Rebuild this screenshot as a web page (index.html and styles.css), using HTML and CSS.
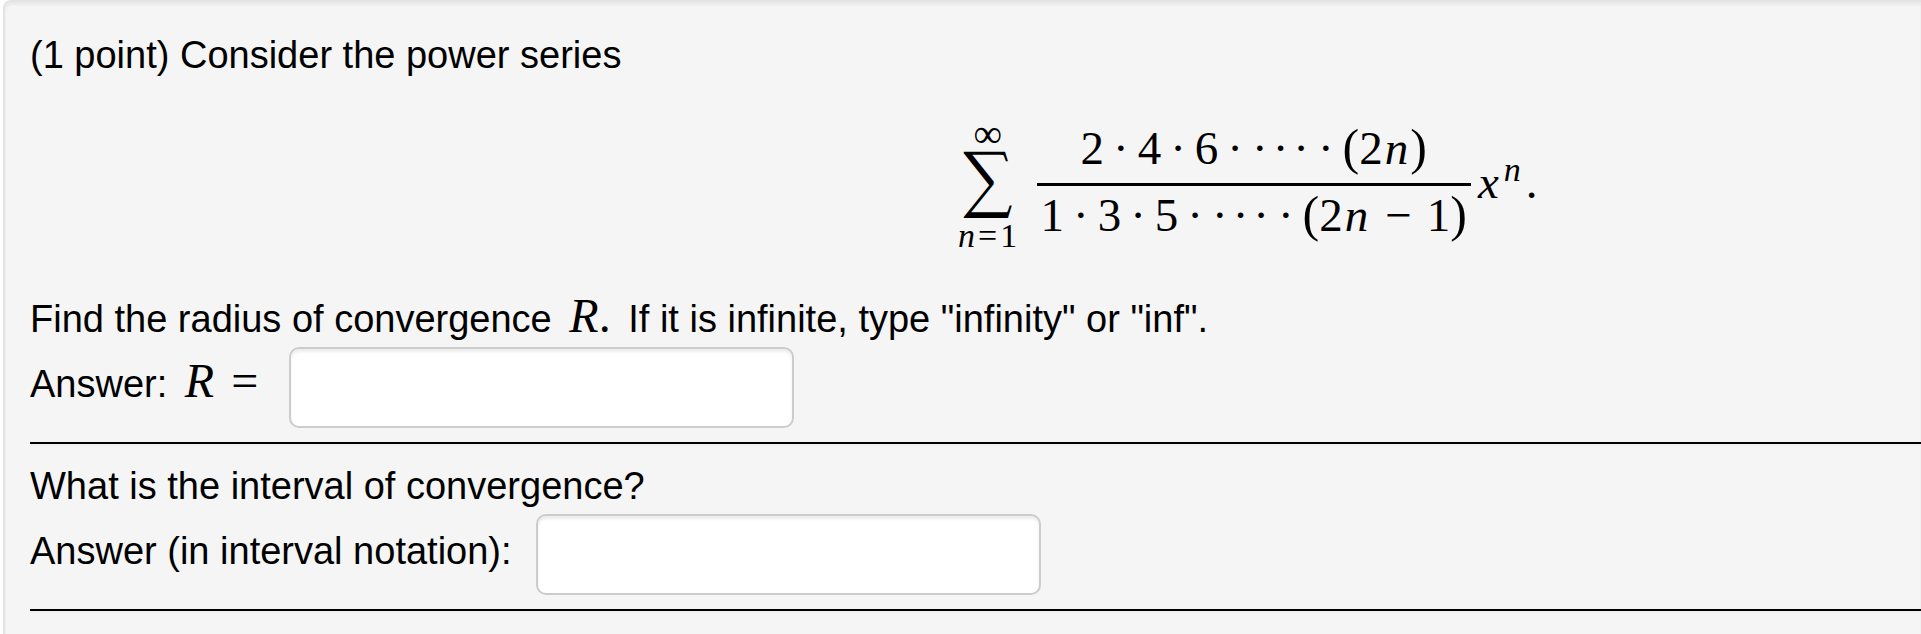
FILE: index.html
```html
<!DOCTYPE html>
<html lang="en">
<head>
<meta charset="utf-8">
<title>Power series</title>
<link rel="stylesheet" href="styles.css">
</head>
<body>
<main class="problem">
  <p class="line">(1 point) Consider the power series</p>
  <div class="formula">
    <div class="sum">
      <span class="sum-upper">∞</span>
      <math class="sum-sign" display="block"><mo>∑</mo></math>
      <span class="sum-lower"><i>n</i><span class="sum-equals">=</span>1</span>
    </div>
    <div class="fraction">
      <div class="numerator">2<span class="op">·</span>4<span class="op">·</span>6<span class="op">·</span><span class="dots"><span>·</span><span>·</span><span>·</span></span><span class="op">·</span><span class="paren">(</span>2<i class="variable">n</i><span class="paren">)</span></div>
      <div class="denominator">1<span class="op">·</span>3<span class="op">·</span>5<span class="op">·</span><span class="dots"><span>·</span><span>·</span><span>·</span></span><span class="op">·</span><span class="paren">(</span>2<i class="variable">n</i><span class="minus">−</span>1<span class="paren">)</span></div>
    </div>
    <div class="term"><i>x</i><sup class="power"><i>n</i></sup>.</div>
  </div>
  <p class="line">Find the radius of convergence <span class="math"><i>R</i>.</span> If it is infinite, type "infinity" or "inf".</p>
  <div class="answer">
    <label class="answer-label" for="radius">Answer: <span class="math"><i>R</i><span class="equals">=</span></span></label>
    <input class="answer-input" id="radius" type="text">
  </div>
  <hr class="rule">
  <p class="line">What is the interval of convergence?</p>
  <div class="answer">
    <label class="answer-label" for="interval">Answer (in interval notation):</label>
    <input class="answer-input" id="interval" type="text">
  </div>
  <hr class="rule">
</main>
</body>
</html>
```
FILE: styles.css
```css
body {
  margin: 0 0 0 3px;
  background: #fff;
  color: #000;
  font-family: "Liberation Sans", Arial, sans-serif;
  font-size: 38px;
  line-height: 55px;
}
.problem {
  box-sizing: border-box;
  min-height: 100vh;
  padding: 26px 0 0 25px;
  border: 2px solid #e3e3e3;
  border-width: 2px 0 0 2px;
  border-radius: 8px 0 0 0;
  background: #f5f5f5;
  box-shadow: inset 0 3px 3px rgba(0, 0, 0, 0.05);
}
.line { margin: 0; }
.formula {
  display: flex;
  justify-content: center;
  align-items: center;
  padding: 26px 0 39px 28%;
  font-family: "Liberation Serif", "Times New Roman", serif;
  font-size: 47px;
}
.sum {
  display: flex;
  flex-direction: column;
  align-items: center;
  margin: 0 14px 0 10px;
  padding-top: 8px;
}
.sum-upper { font-size: 40px; line-height: 34px; }
.sum-sign { font-family: "DejaVu Math TeX Gyre", "DejaVu Serif", serif; font-size: 44px; line-height: 1; }
.sum-lower { font-size: 34px; line-height: 34px; }
.sum-equals { margin: 0 3px; }
.fraction { text-align: center; }
.numerator,
.denominator { padding: 0 4px; line-height: 58px; }
.numerator { padding-bottom: 6px; border-bottom: 3px solid #000; }
.op { margin: 0 9px; }
.dots { display: inline-flex; gap: 5px; }
.minus { margin: 0 15px; }
.variable { margin: 0 2px; }
.paren { font-size: 50px; line-height: 1; }
.term { padding-left: 7px; }
.power {
  margin: 0 5px;
  font-size: 34px;
  line-height: 1;
}
.math {
  margin: 0 7px;
  font-family: "Liberation Serif", "Times New Roman", serif;
  font-size: 48px;
  line-height: 1;
}
.equals { margin-left: 17px; }
.answer {
  display: flex;
  align-items: center;
  gap: 24px;
}
.answer-label { padding-bottom: 7px; }
.answer-input {
  box-sizing: border-box;
  width: 505px;
  height: 81px;
  padding: 11px 16px;
  border: 2px solid #ccc;
  border-radius: 10px;
  background: #fff;
  box-shadow: inset 0 3px 3px rgba(0, 0, 0, 0.075);
  font: inherit;
}
.rule {
  margin: 14px 0 13px;
  border: 0;
  border-top: 2px solid #000;
  border-bottom: 2px solid #f0f0f0;
}
```
